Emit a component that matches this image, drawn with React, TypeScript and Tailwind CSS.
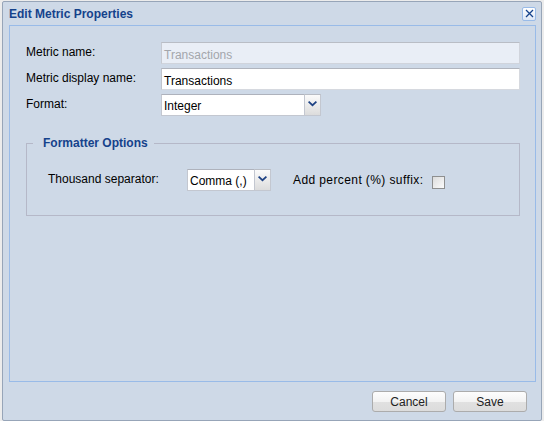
import React from "react";

function Chevron() {
  return (
    <svg width="9" height="6" viewBox="0 0 9 6">
      <path d="M0 1.2 L4.5 5.5 L9 1.2 L7.8 0 L4.5 3.1 L1.2 0 Z" fill="#1f4384" />
    </svg>
  );
}

function Combo({ className, value }: { className: string; value: string }) {
  return (
    <div className={`flex h-[22px] ${className}`}>
      <div className="flex-1 h-[22px] border-y border-l border-[#c3c7d0] border-t-[#aeb2bc] bg-white pl-[2px] pt-[3px] leading-[16px] text-[12px] text-black whitespace-nowrap overflow-hidden">
        {value}
      </div>
      <div className="w-[17px] h-[22px] border border-[#c3c7d0] border-t-[#b8bcc4] bg-[linear-gradient(to_bottom,#fbfbfb,#dcdcdc)] flex items-center justify-center pb-[2px] pr-[1px]">
        <Chevron />
      </div>
    </div>
  );
}

function Btn({ label }: { label: string }) {
  return (
    <button className="w-[74px] h-[21px] rounded-[3px] border border-[#acacac] bg-[linear-gradient(to_bottom,#fdfdfd_0%,#f3f3f3_50%,#e1e1e1_52%,#dcdcdc_100%)] text-[12px] leading-[16px] text-[#222] flex items-center justify-center pt-[1px]">
      {label}
    </button>
  );
}

export default function App() {
  return (
    <div className="w-[544px] h-[421px] bg-[#ececec] pl-[2px] pt-[1px] font-['Liberation_Sans',Arial,sans-serif] text-[12px] text-black">
      <div className="w-[540px] h-[420px] border border-[#97a5b8] rounded-[2px] bg-[#ced9e7] flex flex-col">
        {/* Title bar */}
        <div className="h-[23px] flex items-center justify-between pl-[6px] pr-[5px]">
          <span className="font-bold text-[#15428b] text-[12px] leading-[16px]">Edit Metric Properties</span>
          <button className="w-[14px] h-[14px] rounded-[2px] border border-[#99bbe8] bg-[linear-gradient(to_bottom,#ffffff,#dde7f5)] flex items-center justify-center">
            <svg width="9" height="9" viewBox="0 0 9 9">
              <path d="M1 1 L8 8 M8 1 L1 8" stroke="#15428b" strokeWidth="1.3" fill="none" />
            </svg>
          </button>
        </div>

        {/* Body panel */}
        <div className="ml-[6px] w-[527px] h-[357px] border border-[#99bbe8] flex flex-col">
          <div className="flex flex-col gap-[4px] pl-[16px] pr-[15px] pt-[16px]">
            <div className="flex h-[22px]">
              <span className="w-[135px] pt-[2px] leading-[16px]">Metric name:</span>
              <div className="w-[359px] h-[22px] border border-[#d0d4dc] border-t-[#b9bdc5] border-l-[#c6cad2] bg-[#e9eef6] text-[#a3a6ab] pl-[2px] pt-[4px] leading-[16px]">
                Transactions
              </div>
            </div>
            <div className="flex h-[22px]">
              <span className="w-[135px] pt-[2px] leading-[16px]">Metric display name:</span>
              <div className="w-[359px] h-[22px] border border-[#d6d9df] border-t-[#b0b4bd] border-l-[#c0c4cc] bg-white text-black pl-[2px] pt-[4px] leading-[16px]">
                Transactions
              </div>
            </div>
            <div className="flex h-[22px]">
              <span className="w-[135px] pt-[2px] leading-[16px]">Format:</span>
              <Combo className="w-[160px]" value="Integer" />
            </div>
          </div>

          <fieldset className="mt-[19px] ml-[16px] w-[494px] border border-[#b5b8c8] pl-[21px] pt-[18px] pb-[24px]">
            <legend className="-ml-[15px] pl-[10px] pr-[6px] font-bold text-[#15428b] leading-[16px]">Formatter Options</legend>
            <div className="flex items-start h-[22px]">
              <span className="w-[139px] pt-[2px] leading-[16px] whitespace-nowrap">Thousand separator:</span>
              <Combo className="w-[84px]" value="Comma (,)" />
              <span className="ml-[22px] w-[139px] pt-[3px] leading-[16px] tracking-[0.4px] whitespace-nowrap">Add percent (%) suffix:</span>
              <span className="mt-[7px] w-[13px] h-[13px] border border-[#8e8f8f] bg-[linear-gradient(to_bottom_right,#dcdcdc,#fbfbfb)]" />
            </div>
          </fieldset>
        </div>

        {/* Footer buttons */}
        <div className="flex-1 flex items-start justify-end gap-[7px] pt-[9px] pr-[14px]">
          <Btn label="Cancel" />
          <Btn label="Save" />
        </div>
      </div>
    </div>
  );
}
